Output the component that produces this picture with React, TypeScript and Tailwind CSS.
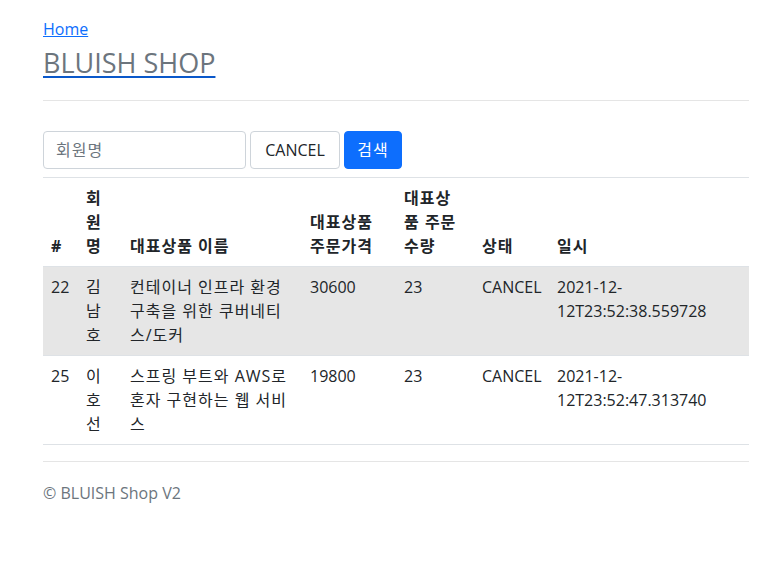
import React from "react";

type Cell = { lines: string[]; ko?: boolean };

const headers: Cell[] = [
  { lines: ["#"] },
  { lines: ["회", "원", "명"], ko: true },
  { lines: ["대표상품 이름"], ko: true },
  { lines: ["대표상품", "주문가격"], ko: true },
  { lines: ["대표상", "품 주문", "수량"], ko: true },
  { lines: ["상태"], ko: true },
  { lines: ["일시"], ko: true },
];

const rows: { active: boolean; cells: Cell[] }[] = [
  {
    active: true,
    cells: [
      { lines: ["22"] },
      { lines: ["김", "남", "호"], ko: true },
      { lines: ["컨테이너 인프라 환경", "구축을 위한 쿠버네티", "스/도커"], ko: true },
      { lines: ["30600"] },
      { lines: ["23"] },
      { lines: ["CANCEL"] },
      { lines: ["2021-12-", "12T23:52:38.559728"] },
    ],
  },
  {
    active: false,
    cells: [
      { lines: ["25"] },
      { lines: ["이", "호", "선"], ko: true },
      { lines: ["스프링 부트와 AWS로", "혼자 구현하는 웹 서비", "스"], ko: true },
      { lines: ["19800"] },
      { lines: ["23"] },
      { lines: ["CANCEL"] },
      { lines: ["2021-12-", "12T23:52:47.313740"] },
    ],
  },
];

function Lines({ c }: { c: Cell }) {
  return (
    <>
      {c.lines.map((l, i) => (
        <span key={i} className={"block whitespace-nowrap " + (c.ko ? "tracking-[1px]" : "")}>
          {l}
        </span>
      ))}
    </>
  );
}

export default function App() {
  return (
    <div
      className="min-h-screen bg-white text-[#212529] text-base leading-6"
      style={{ fontFamily: '"Open Sans", "Noto Sans CJK KR", sans-serif' }}
    >
      <div className="ml-[43px] w-[706px] pt-[17px]">
        <a href="#" className="text-[#0d6efd] underline">
          Home
        </a>
        <h3 className="mt-[6px] text-[27px] leading-[1.2] font-normal">
          <a
            href="#"
            className="text-[#6c757d] underline decoration-[#0a58ca] decoration-2 underline-offset-[3px]"
          >
            BLUISH SHOP
          </a>
        </h3>
        <hr className="mt-[21px] border-0 border-t border-[#e5e5e5]" />
        <form className="mt-[30px] flex gap-1" onSubmit={(e) => e.preventDefault()}>
          <input
            type="text"
            placeholder="회원명"
            className="w-[203px] h-[38px] rounded border border-[#ced4da] px-3 text-base tracking-[1px] text-[#212529] placeholder:text-[#6c757d] outline-none"
          />
          <button
            type="button"
            className="w-[90px] h-[38px] rounded border border-[#ced4da] bg-white text-[#212529] flex items-center justify-center"
          >
            CANCEL
          </button>
          <button
            type="submit"
            className="w-[58px] h-[38px] rounded border border-[#0d6efd] bg-[#0d6efd] text-white tracking-[1px] flex items-center justify-center"
          >
            검색
          </button>
        </form>
        <table className="mt-2 w-full table-fixed border-collapse border-t border-[#dee2e6]">
          <colgroup>
            <col className="w-[35px]" />
            <col className="w-[44px]" />
            <col className="w-[180px]" />
            <col className="w-[94px]" />
            <col className="w-[78px]" />
            <col className="w-[75px]" />
            <col />
          </colgroup>
          <thead>
            <tr>
              {headers.map((h, i) => (
                <th key={i} className="p-2 text-left align-bottom font-bold border-b border-[#dee2e6]">
                  <Lines c={h} />
                </th>
              ))}
            </tr>
          </thead>
          <tbody>
            {rows.map((r, ri) => (
              <tr key={ri} className={r.active ? "bg-[#e6e6e6]" : "bg-white"}>
                {r.cells.map((c, i) => (
                  <td key={i} className="p-2 align-top border-b border-[#dee2e6]">
                    <Lines c={c} />
                  </td>
                ))}
              </tr>
            ))}
          </tbody>
        </table>
        <hr className="mt-4 border-0 border-t border-[#e5e5e5]" />
        <footer className="mt-[19px] text-[#6c757d]">© BLUISH Shop V2</footer>
      </div>
    </div>
  );
}
